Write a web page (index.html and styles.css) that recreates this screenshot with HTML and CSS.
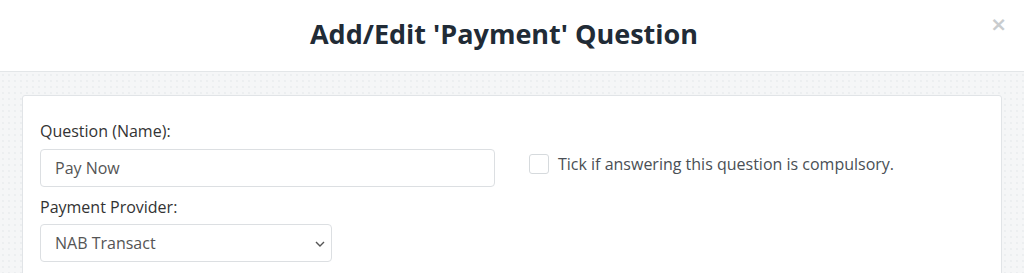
FILE: index.html
```html
<!DOCTYPE html>
<html lang="en">
<head>
<meta charset="utf-8">
<title>Add/Edit 'Payment' Question</title>
<link rel="stylesheet" href="styles.css">
</head>
<body>
<div class="modal">
  <header class="modal-header">
    <h1 class="modal-title">Add/Edit 'Payment' Question</h1>
    <button class="close" type="button" aria-label="Close">&times;</button>
  </header>
  <div class="modal-body">
    <div class="card">
      <div class="row">
        <div class="col-main">
          <label class="field-label">Question (Name):</label>
          <div class="input">Pay Now</div>
        </div>
        <div class="col-side">
          <label class="check">
            <span class="checkbox"></span>
            <span class="check-text">Tick if answering this question is compulsory.</span>
          </label>
        </div>
      </div>
      <div class="field">
        <label class="field-label">Payment Provider:</label>
        <div class="select">
          <span>NAB Transact</span>
          <svg class="chev" width="10" height="6" viewBox="0 0 10 6"><path d="M1 1l4 4 4-4" fill="none" stroke="#555" stroke-width="1.4"/></svg>
        </div>
      </div>
    </div>
  </div>
</div>
</body>
</html>
```
FILE: styles.css
```css
html, body {
  margin: 0;
  padding: 0;
}
body {
  font-family: "Open Sans", "Liberation Sans", sans-serif;
  color: #333;
  background: #f5f6f7;
}
.modal {
  width: 1024px;
  height: 273px;
  overflow: hidden;
}
.modal-header {
  position: relative;
  height: 71px;
  background: #fff;
  border-bottom: 1px solid #e3e6e8;
  display: flex;
  align-items: center;
  justify-content: center;
}
.modal-title {
  margin: 0 16px 4px 0;
  font-size: 27px;
  font-weight: 700;
  color: #212b36;
  line-height: 36px;
}
.close {
  position: absolute;
  right: 17px;
  top: 12px;
  border: 0;
  background: none;
  padding: 0;
  font-family: "DejaVu Sans", sans-serif;
  font-size: 20px;
  line-height: 24px;
  color: #c9ccce;
  font-weight: 700;
}
.modal-body {
  background-color: #f5f6f7;
  background-image: radial-gradient(circle, #eaecee 0.6px, transparent 1px);
  background-size: 6px 6px;
  padding: 23px 22px 0 22px;
}
.card {
  background: #fff;
  border: 1px solid #e1e4e7;
  border-radius: 3px;
  padding: 24px 17px 30px 17px;
  height: 200px;
}
.row {
  display: flex;
  align-items: flex-start;
}
.col-main {
  width: 455px;
}
.col-side {
  padding-left: 34px;
  padding-top: 33px;
}
.field-label {
  display: block;
  font-size: 16px;
  line-height: 22px;
  color: #333;
  margin-bottom: 7px;
}
.input, .select {
  box-sizing: border-box;
  height: 38px;
  border: 1px solid #dcdfe2;
  border-radius: 4px;
  padding: 0 14px;
  display: flex;
  align-items: center;
  font-size: 16px;
  color: #555;
}
.field {
  margin-top: 9px;
}
.field .field-label {
  margin-bottom: 6px;
}
.select {
  width: 292px;
  justify-content: space-between;
  padding-right: 6px;
}
.chev {
  display: block;
  margin-top: 1px;
}
.check {
  display: flex;
  align-items: center;
  gap: 9px;
}
.checkbox {
  box-sizing: border-box;
  width: 20px;
  height: 20px;
  border: 1px solid #d6dadd;
  border-radius: 3px;
  background: #fff;
}
.check-text {
  font-size: 16px;
  color: #4a4f55;
  line-height: 22px;
}
```
